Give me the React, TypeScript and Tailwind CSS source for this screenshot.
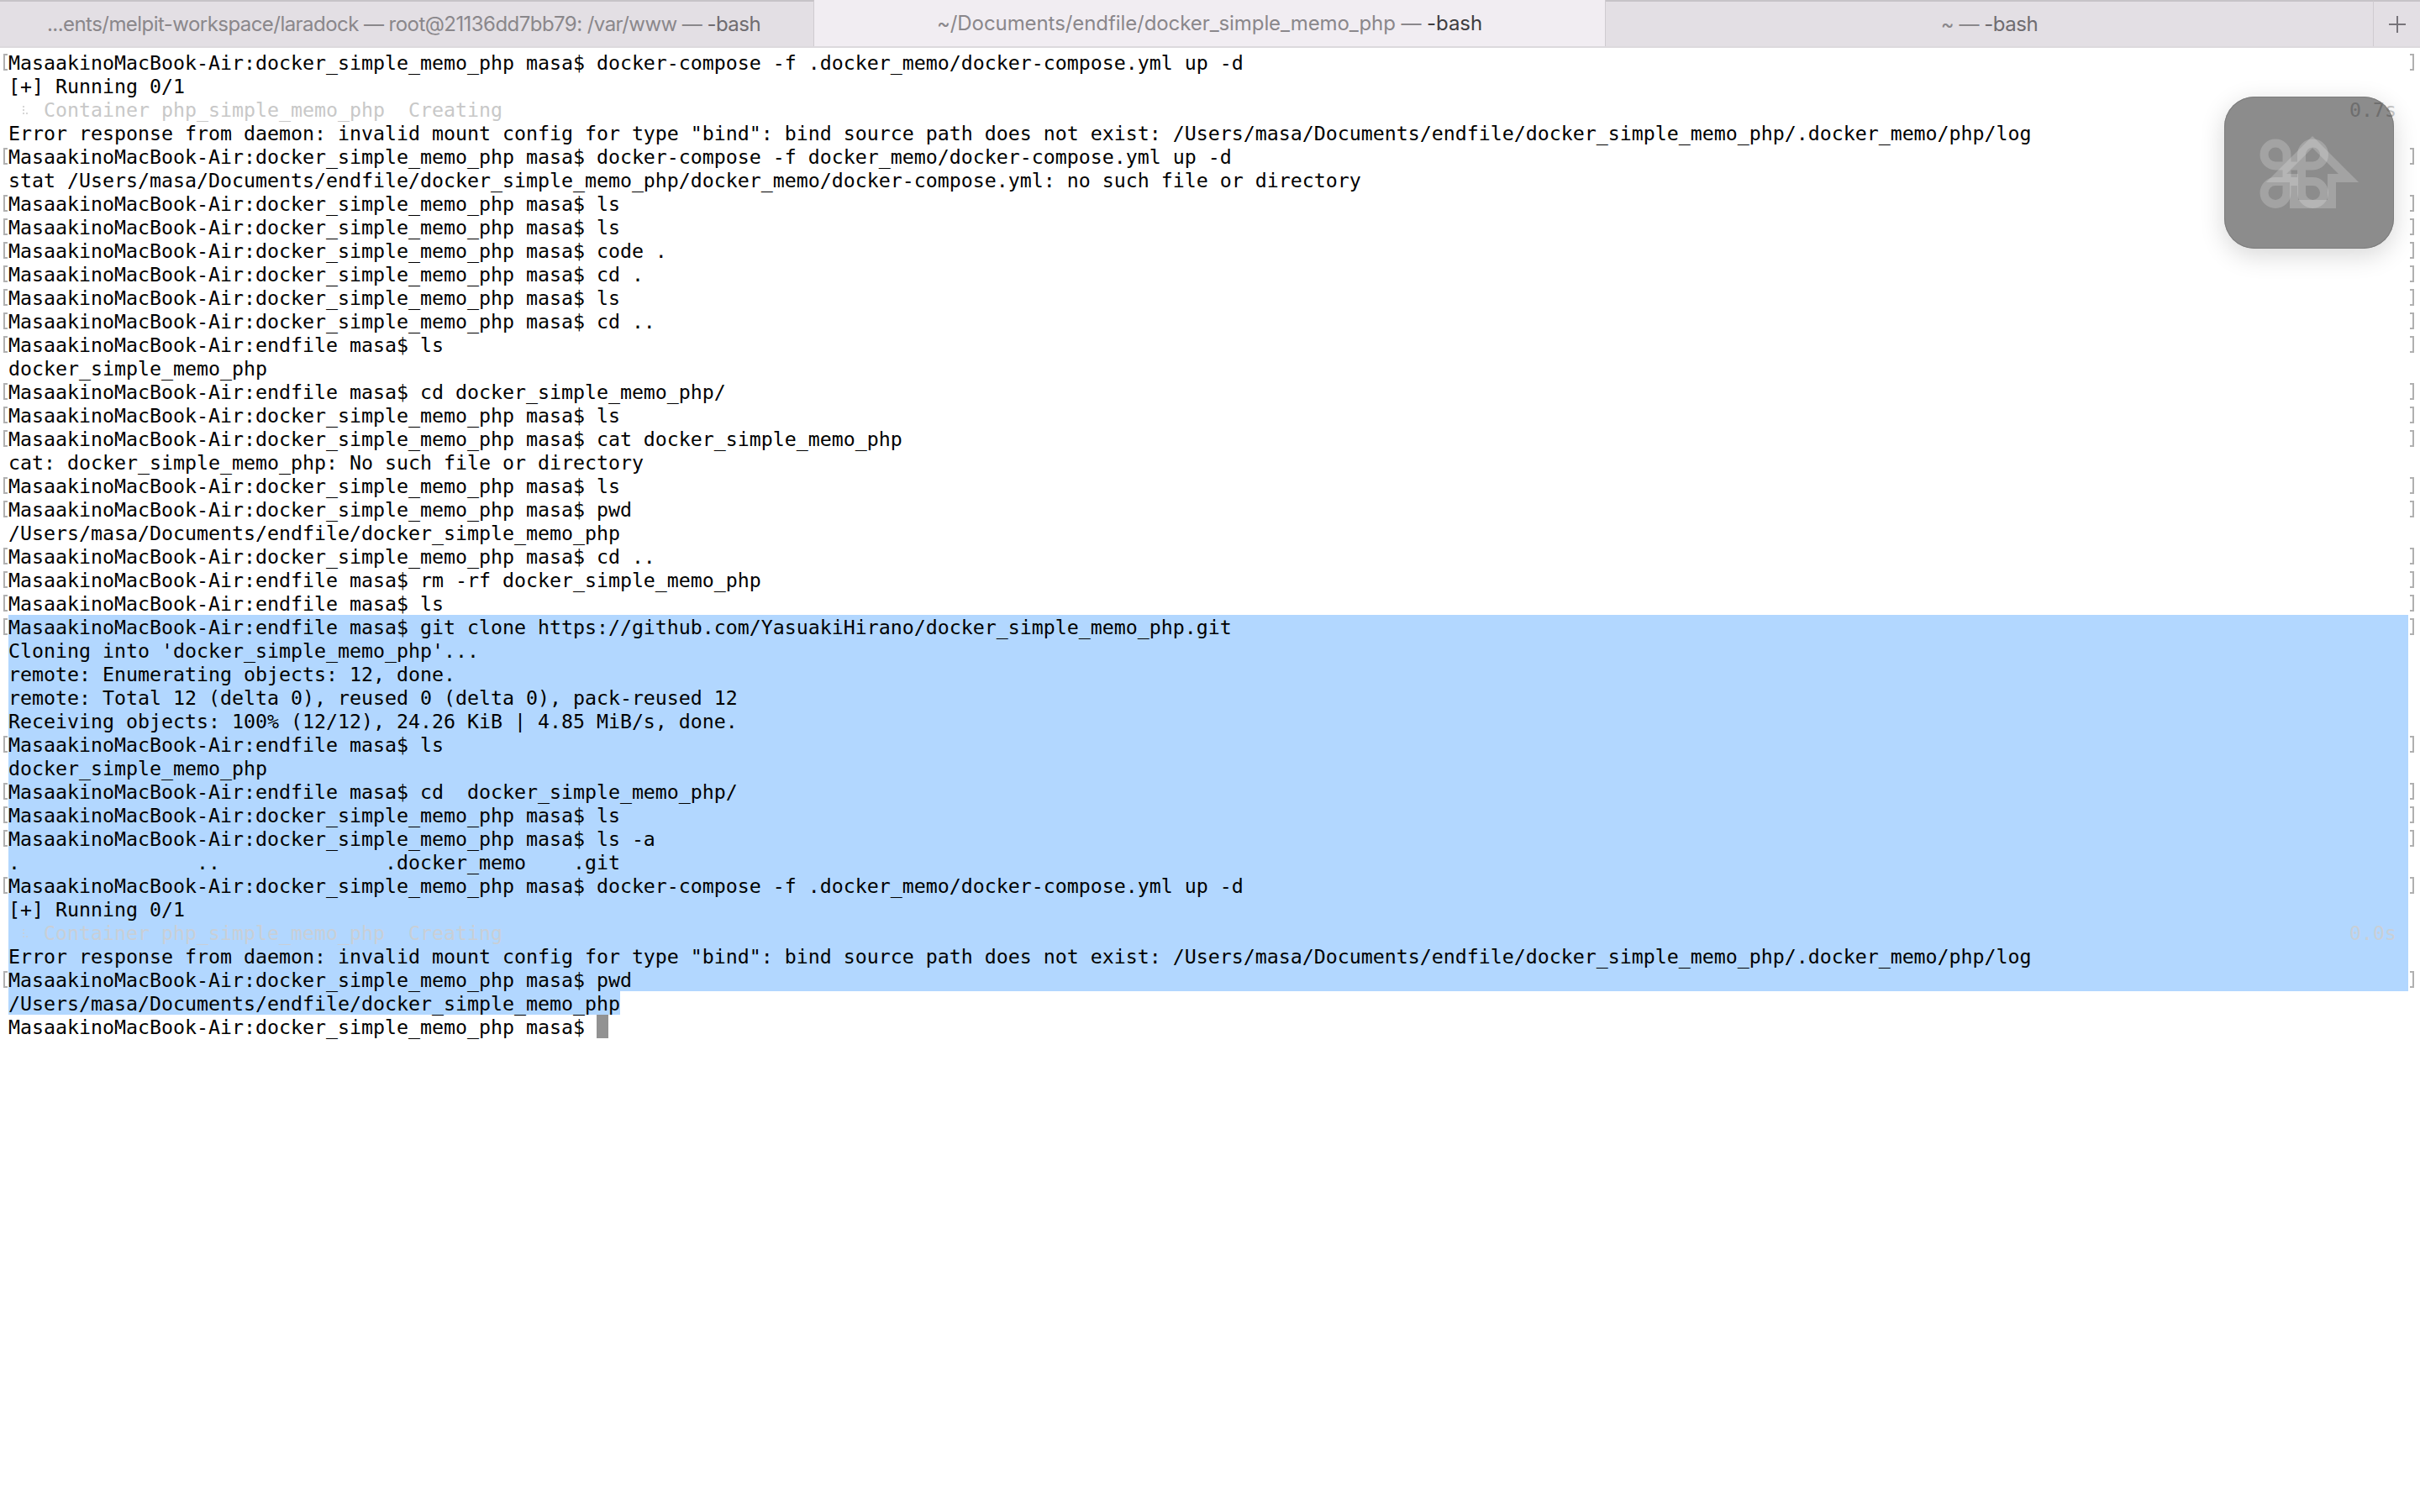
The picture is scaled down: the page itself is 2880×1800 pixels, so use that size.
import React from 'react';

type Row = {
  text?: string;
  mark?: boolean;
  sel?: 'full' | 'part';
  dim?: boolean;
  time?: string;
  cursor?: boolean;
};

const D = 'MasaakinoMacBook-Air:docker_simple_memo_php masa$ ';
const E = 'MasaakinoMacBook-Air:endfile masa$ ';
const ERR = 'Error response from daemon: invalid mount config for type "bind": bind source path does not exist: /Users/masa/Documents/endfile/docker_simple_memo_php/.docker_memo/php/log';

const rows: Row[] = [
  { text: D + 'docker-compose -f .docker_memo/docker-compose.yml up -d', mark: true },
  { text: '[+] Running 0/1' },
  { text: ' Container php_simple_memo_php  Creating', dim: true, time: '0.7s' },
  { text: ERR },
  { text: D + 'docker-compose -f docker_memo/docker-compose.yml up -d', mark: true },
  { text: 'stat /Users/masa/Documents/endfile/docker_simple_memo_php/docker_memo/docker-compose.yml: no such file or directory' },
  { text: D + 'ls', mark: true },
  { text: D + 'ls', mark: true },
  { text: D + 'code .', mark: true },
  { text: D + 'cd .', mark: true },
  { text: D + 'ls', mark: true },
  { text: D + 'cd ..', mark: true },
  { text: E + 'ls', mark: true },
  { text: 'docker_simple_memo_php' },
  { text: E + 'cd docker_simple_memo_php/', mark: true },
  { text: D + 'ls', mark: true },
  { text: D + 'cat docker_simple_memo_php', mark: true },
  { text: 'cat: docker_simple_memo_php: No such file or directory' },
  { text: D + 'ls', mark: true },
  { text: D + 'pwd', mark: true },
  { text: '/Users/masa/Documents/endfile/docker_simple_memo_php' },
  { text: D + 'cd ..', mark: true },
  { text: E + 'rm -rf docker_simple_memo_php', mark: true },
  { text: E + 'ls', mark: true },
  { text: E + 'git clone https://github.com/YasuakiHirano/docker_simple_memo_php.git', mark: true, sel: 'full' },
  { text: "Cloning into 'docker_simple_memo_php'...", sel: 'full' },
  { text: 'remote: Enumerating objects: 12, done.', sel: 'full' },
  { text: 'remote: Total 12 (delta 0), reused 0 (delta 0), pack-reused 12', sel: 'full' },
  { text: 'Receiving objects: 100% (12/12), 24.26 KiB | 4.85 MiB/s, done.', sel: 'full' },
  { text: E + 'ls', mark: true, sel: 'full' },
  { text: 'docker_simple_memo_php', sel: 'full' },
  { text: E + 'cd  docker_simple_memo_php/', mark: true, sel: 'full' },
  { text: D + 'ls', mark: true, sel: 'full' },
  { text: D + 'ls -a', mark: true, sel: 'full' },
  { text: '.               ..              .docker_memo    .git', sel: 'full' },
  { text: D + 'docker-compose -f .docker_memo/docker-compose.yml up -d', mark: true, sel: 'full' },
  { text: '[+] Running 0/1', sel: 'full' },
  { text: ' Container php_simple_memo_php  Creating', dim: true, time: '0.0s', sel: 'full' },
  { text: ERR, sel: 'full' },
  { text: D + 'pwd', mark: true, sel: 'full' },
  { text: '/Users/masa/Documents/endfile/docker_simple_memo_php', sel: 'part' },
  { text: D, cursor: true },
];

const Tab = ({ title, cmd, active, width, tracking }: { title: string; cmd: string; active?: boolean; width: string; tracking: string }) => (
  <div className={`${width} flex h-full items-center justify-center border-r border-[#cfcbd0] text-[24px] ${active ? 'bg-[#f1edf2]' : 'border-t-2 border-t-[#c6c3c7] bg-[#e3dfe4]'}`}>
    <span className={`whitespace-pre text-[#8a878b] ${tracking}`}>
      {title}
      <span className={active ? 'text-[#3f3d40]' : 'text-[#6f6c70]'}>{cmd}</span>
    </span>
  </div>
);

const LineRow = ({ row }: { row: Row }) => {
  const dimColor = row.sel ? 'text-[#c9cfd6]' : 'text-[#c8c8c8]';
  return (
    <div className="flex h-7">
      <div className="flex w-[10px] shrink-0 items-center justify-end pr-px">
        {row.mark && <div className="h-[20px] w-[5px] border-y-2 border-l-2 border-[#b0b0b0]" />}
      </div>
      <div className={`flex min-w-0 ${row.sel === 'part' ? 'w-fit' : 'flex-1'} justify-between ${row.sel ? 'bg-[#b2d7ff]' : ''}`}>
        <div className="flex items-center whitespace-pre">
          {row.dim && (
            <span className={`flex h-[12px] w-[28px] items-center justify-end pr-[5px] pt-[2px] ${dimColor}`}>
              <svg width="6" height="10" viewBox="0 0 6 10" fill="currentColor">
                <circle cx="1" cy="1" r="1" />
                <circle cx="1" cy="5" r="1" />
                <circle cx="1" cy="9" r="1" />
                <circle cx="5" cy="9" r="1" />
              </svg>
            </span>
          )}
          {/* relative keeps descenders above the next row's selection background */}
          <span className={`relative pt-[2px] ${row.dim ? dimColor : 'text-black'}`}>{row.text}</span>
          {row.cursor && <span className="h-[28px] w-[14px] bg-[#929292]" />}
        </div>
        {row.time && <span className={`mr-[14px] flex items-center pt-[2px] ${dimColor}`}>{row.time}</span>}
      </div>
      <div className="flex w-[14px] shrink-0 items-center pl-[2px]">
        {row.mark && <div className="h-[20px] w-[5px] border-y-2 border-r-2 border-[#b0b0b0]" />}
      </div>
    </div>
  );
};

export default function App() {
  return (
    <div className="relative flex h-[1800px] w-[2880px] flex-col overflow-hidden bg-white font-['Inter',sans-serif]">
      <div className="flex h-[57px] shrink-0 border-b-2 border-[#dcd9dd]">
        <Tab width="w-[969px] pr-[7px]" tracking="tracking-[-0.55px]" title="...ents/melpit-workspace/laradock — root@21136dd7bb79: /var/www — " cmd="-bash" />
        <Tab width="w-[942px]" tracking="tracking-[-0.08px]" active title="~/Documents/endfile/docker_simple_memo_php — " cmd="-bash" />
        <Tab width="w-[914px]" tracking="tracking-[-0.45px]" title="~ — " cmd="-bash" />
        <div className="flex flex-1 items-center justify-center border-t-2 border-t-[#c6c3c7] bg-[#e3dfe4] text-[#77747a]">
          <svg width="22" height="22" viewBox="0 0 22 22" fill="none" stroke="currentColor" strokeWidth="2"><path d="M11 1v20M1 11h20" /></svg>
        </div>
      </div>
      <div className="pt-[3px] font-['DejaVu_Sans_Mono',monospace] text-[23.25px] leading-7">
        {rows.map((row, i) => <LineRow key={i} row={row} />)}
      </div>
      {/* shortcut HUD that floats over the terminal */}
      <div className="absolute left-[2647px] top-[115px] h-[181px] w-[202px] rounded-[36px] bg-black/45 shadow-[0_8px_30px_rgba(0,0,0,0.16)] ring-1 ring-inset ring-[#7d7d7d]">
        <svg width="202" height="181" viewBox="0 0 202 181" fill="none" stroke="white" strokeOpacity="0.2" strokeWidth="10">
          <path d="M61 82.5h44.5a13.5 13.5 0 1 0-13.5-13.5v45.5a13.5 13.5 0 1 0 13.5-13.5H61a13.5 13.5 0 1 0 13.5 13.5V69A13.5 13.5 0 1 0 61 82.5Z" />
          <path d="M105 54L148 97H128V128H83V97H62Z" />
        </svg>
      </div>
    </div>
  );
}
